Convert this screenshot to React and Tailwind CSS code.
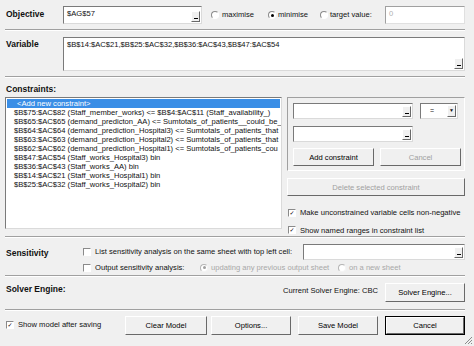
import React from "react";

const constraints = [
  "$B$75:$AC$82 (Staff_member_works) <= $B$4:$AC$11 (Staff_availability_)",
  "$B$65:$AC$65 (demand_predicton_AA) <= Sumtotals_of_patients__could_be_",
  "$B$64:$AC$64 (demand_prediction_Hospital3) <= Sumtotals_of_patients_that",
  "$B$63:$AC$63 (demand_prediction_Hospital2) <= Sumtotals_of_patients_that",
  "$B$62:$AC$62 (demand_prediction_Hospital1) <= Sumtotals_of_patients_cou",
  "$B$47:$AC$54 (Staff_works_Hospital3) bin",
  "$B$36:$AC$43 (Staff_works_AA) bin",
  "$B$14:$AC$21 (Staff_works_Hospital1) bin",
  "$B$25:$AC$32 (Staff_works_Hospital2) bin",
];

const Separator = () => (
  <div className="ml-[5px] mr-[9px] border-t border-t-[#a0a0a0] border-b border-b-white" />
);

const RefButton = () => (
  <div className="shrink-0 w-[9px] h-[11px] mr-[1px] mb-[1px] flex items-end justify-center border border-t-white border-l-white border-b-[#696969] border-r-[#696969] bg-[#f0f0f0]">
    <div className="w-[4px] h-[1px] bg-black mb-[2px]" />
  </div>
);

const Radio = ({ checked, disabled }) => (
  <span
    className={`shrink-0 inline-flex w-[8px] h-[8px] rounded-full border items-center justify-center ${
      disabled ? "border-[#b4b4b4] border-r-[#f4f4f4] border-b-[#f4f4f4]" : "border-[#8a8a8a] border-r-white border-b-white"
    } bg-white`}
  >
    {checked && <span className={`w-[3px] h-[3px] rounded-full ${disabled ? "bg-[#a0a0a0]" : "bg-black"}`} />}
  </span>
);

const Check = ({ checked }) => (
  <span className="shrink-0 inline-flex w-[8px] h-[8px] border border-[#8a8a8a] border-r-white border-b-white bg-white items-center justify-center text-[6px] leading-none text-black">
    {checked ? "✓" : ""}
  </span>
);

const Button = ({ children, className = "", disabled, isDefault }) => (
  <div className={`shrink-0 ${isDefault ? "border border-black" : ""} ${className}`}>
    <div
      className={`h-full flex items-center justify-center whitespace-nowrap border border-t-white border-l-white border-b-[#696969] border-r-[#696969] bg-[#f0f0f0] ${
        disabled ? "text-[#a0a0a0]" : "text-black"
      }`}
    >
      {children}
    </div>
  </div>
);

const Field = ({ className = "", children, withRef }) => (
  <div className={`shrink-0 flex items-end justify-between border border-[#7a7a7a] border-r-[#dadada] border-b-[#dadada] bg-white ${className}`}>
    <div className="self-start pl-[3px] pt-[3px] leading-none whitespace-nowrap">{children}</div>
    {withRef && <RefButton />}
  </div>
);

export default function App() {
  return (
    <div
      className="w-[474px] h-[346px] bg-[#f0f0f0] text-[7.6px] text-[#111] overflow-hidden flex flex-col whitespace-nowrap"
      style={{ fontFamily: '"Liberation Sans", "DejaVu Sans", sans-serif' }}
    >
      {/* Objective */}
      <div className="h-[29px] flex items-start pl-[6px] pt-[6px]">
        <div className="w-[57px] font-bold text-[8.5px] pt-[2px]">Objective</div>
        <Field className="w-[139px] h-[18px]" withRef>$AG$57</Field>
        <div className="w-[57px] h-[18px] flex items-center ml-[9px] gap-[3px]">
          <Radio />
          <span>maximise</span>
        </div>
        <div className="w-[52px] h-[18px] flex items-center gap-[2px]">
          <Radio checked />
          <span>minimise</span>
        </div>
        <div className="w-[65px] h-[18px] flex items-center gap-[2px]">
          <Radio />
          <span>target value:</span>
        </div>
        <div className="w-[80px] h-[18px] border border-[#a0a0a0] border-r-[#e0e0e0] border-b-[#e0e0e0] bg-white text-[#b0b0b0] pl-[3px] pt-[3px] leading-none">
          0
        </div>
      </div>
      <Separator />

      {/* Variable */}
      <div className="h-[45px] flex items-start pl-[6px] pt-[6px]">
        <div className="w-[57px] font-bold text-[8.5px] pt-[1px]">Variable</div>
        <Field className="w-[402px] h-[34px]" withRef>
          $B$14:$AC$21,$B$25:$AC$32,$B$36:$AC$43,$B$47:$AC$54
        </Field>
      </div>
      <Separator />

      {/* Constraints */}
      <div className="h-[158px] flex flex-col pl-[5px] pt-[5px]">
        <div className="font-bold text-[8.5px] pl-[1px] h-[16px]">Constraints:</div>
        <div className="flex gap-[5px]">
          <div className="w-[277px] h-[132px] border border-[#7a7a7a] border-r-[#dadada] border-b-[#dadada] bg-white pt-[1px] text-[7.6px] leading-[9px] overflow-hidden">
            <div className="mx-[1px] bg-[#3a8ee6] text-white pl-[10px]">&lt;Add new constraint&gt;</div>
            {constraints.map((c) => (
              <div key={c} className="pl-[8px]">
                {c}
              </div>
            ))}
          </div>
          <div className="flex flex-col w-[179px]">
            <div className="w-[178px] h-[74px] border border-[#a0a0a0] border-r-white border-b-white flex flex-col pl-[5px] pt-[5px]">
              <div className="flex gap-[7px]">
                <Field className="w-[120px] h-[16px]" withRef />
                <div className="w-[38px] h-[16px] border border-[#7a7a7a] border-r-[#dadada] border-b-[#dadada] bg-white flex items-center justify-between pl-[9px] pr-[1px]">
                  <span className="text-[7px]">=</span>
                  <span className="w-[9px] h-[12px] flex items-center justify-center text-[5px] border border-t-white border-l-white border-b-[#696969] border-r-[#696969] bg-[#f0f0f0]">
                    ▼
                  </span>
                </div>
              </div>
              <Field className="w-[120px] h-[16px] mt-[7px]" withRef />
              <div className="flex gap-[6px] mt-[6px]">
                <Button className="w-[81px] h-[18px]">Add constraint</Button>
                <Button className="w-[81px] h-[18px]" disabled>
                  Cancel
                </Button>
              </div>
            </div>
            <Button className="w-[178px] h-[18px] mt-[7px]" disabled>
              Delete selected constraint
            </Button>
            <div className="flex items-center gap-[4px] mt-[11px] pl-[1px]">
              <Check checked />
              <span>Make unconstrained variable cells non-negative</span>
            </div>
            <div className="flex items-center gap-[4px] mt-[6px] pl-[1px]">
              <Check checked />
              <span>Show named ranges in constraint list</span>
            </div>
          </div>
        </div>
      </div>
      <Separator />

      {/* Sensitivity */}
      <div className="h-[37px] flex pl-[6px] pt-[6px]">
        <div className="w-[77px] font-bold text-[8.5px] pt-[3px]">Sensitivity</div>
        <div className="flex flex-col">
          <div className="flex items-center h-[16px]">
            <Check />
            <span className="ml-[4px] w-[208px]">List sensitivity analysis on the same sheet with top left cell:</span>
            <Field className="w-[162px] h-[16px]" withRef />
          </div>
          <div className="flex items-center h-[14px] mt-[1px]">
            <Check />
            <span className="ml-[4px] w-[105px]">Output sensitivity analysis:</span>
            <span className="w-[138px] flex items-center gap-[3px] text-[#a8a8a8]">
              <Radio checked disabled />
              updating any previous output sheet
            </span>
            <span className="flex items-center gap-[3px] text-[#a8a8a8]">
              <Radio disabled />
              on a new sheet
            </span>
          </div>
        </div>
      </div>
      <Separator />

      {/* Solver engine */}
      <div className="h-[32px] flex items-start pl-[6px] pt-[5px] pr-[9px]">
        <div className="font-bold text-[8.5px] pt-[1px]">Solver Engine:</div>
        <div className="ml-auto pt-[3px]">Current Solver Engine: CBC</div>
        <Button className="w-[80px] h-[19px] ml-[7px] mt-[1px]">Solver Engine...</Button>
      </div>
      <Separator />

      {/* Bottom */}
      <div className="relative flex-1 flex items-start pl-[6px] pt-[5px] pr-[9px]">
        <div className="flex items-center gap-[4px] pt-[3px]">
          <Check checked />
          <span>Show model after saving</span>
        </div>
        <div className="ml-auto flex">
          <Button className="w-[82px] h-[19px]">Clear Model</Button>
          <Button className="w-[80px] h-[19px] ml-[4px]">Options...</Button>
          <Button className="w-[80px] h-[19px] ml-[7px]">Save Model</Button>
          <Button className="w-[80px] h-[19px] ml-[7px]" isDefault>
            Cancel
          </Button>
        </div>
        <svg className="absolute right-[1px] bottom-[1px]" width="10" height="10" viewBox="0 0 10 10">
          <path d="M9 2 L2 9 M9 5 L5 9 M9 8 L8 9" stroke="#8a8a8a" strokeWidth="1" />
        </svg>
      </div>
    </div>
  );
}
